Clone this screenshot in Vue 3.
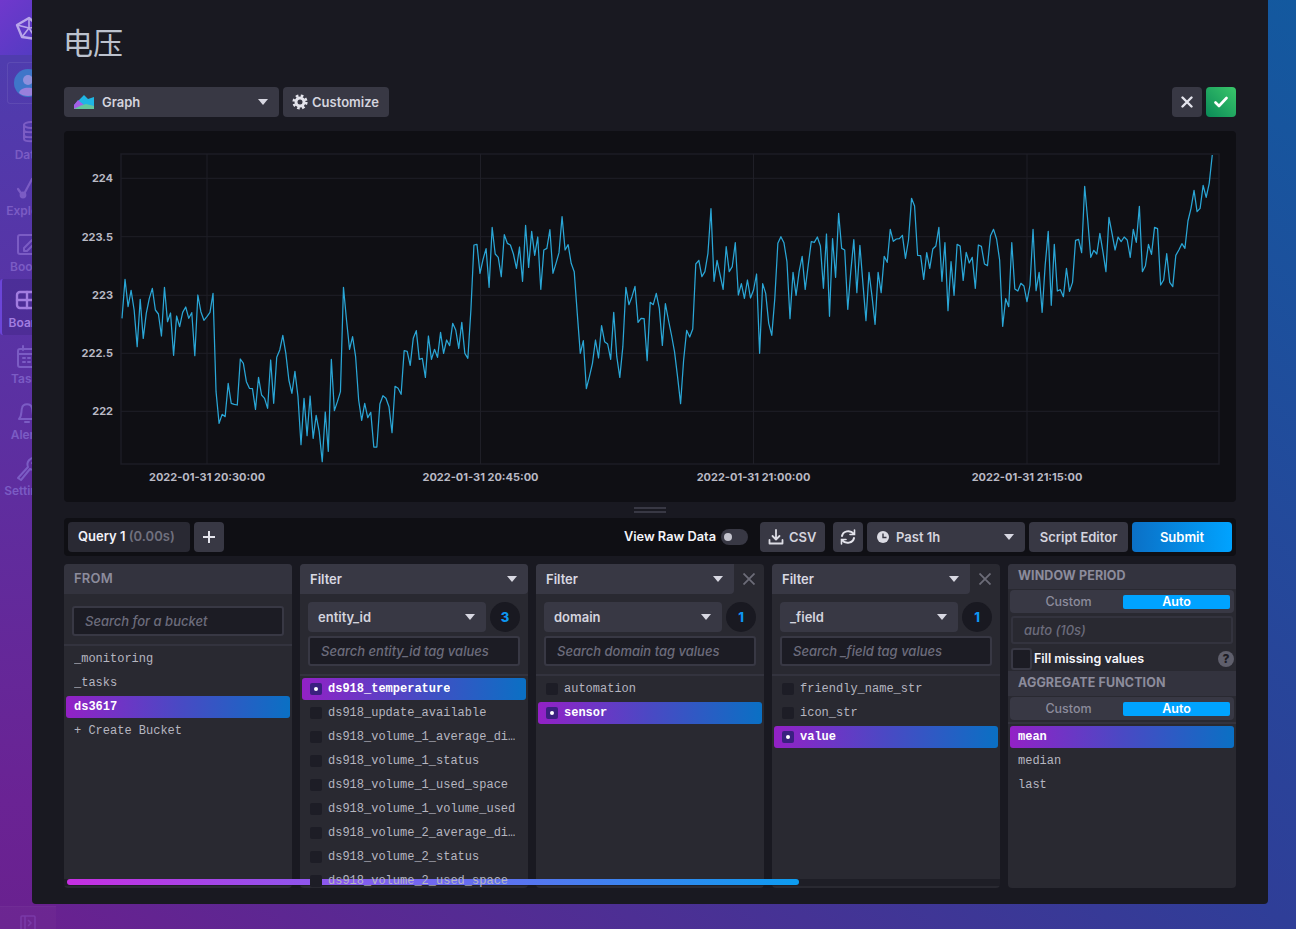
<script setup>
const segA = [505,388,470,421,480,590,448,565,490,445,415,480,492,558,412,515,489,616,498,530,487,471,505,488,617,435,485,511,500,487,430,725,820,793,800,700,760,763,765,627,640,695,715,716,778,682,735,745,775,630,760,622,600,556,610,690,730,664,740,884,745,857,738,865,796,845,935,786,904,628,782,755,725,412,510,598,560,620,750,811,760,803,787,891,891,762,737,745,770,848,709,715,733,602,604,646,565,542,628,625,682,558,628,598,622,547,610,570,587,520,540,595,517,610,625,480,285,283]
const segB = [370,328,296,412,232,312,322,380,254,280,285,312,355,291,394,226,352,244,316,261,418,300,295,239,370,340,308,200,300,284,340,365,490,610,572,716,680,640,570,624,527,575,582,628,487,620,682,590,412,464,440,409,517,505,506,632,457,464,430,475,586,461,510,555,605,680,761,630,541,561,537,342,331,380,365,310,176,394,331,375,418,290,365,350,278,435,401,445,390,444,420,372,610,401,430,520,556,445,280,260,278,335,506,367,436,365,319,418,345,275,277,261,288,415,252,499,266,382,190]
const segC = [295,300,478,365,269,428,286,400,512,367,440,523,367,428,319,337,238,274,267,266,256,325,270,145,168,316,317,388,308,355,297,288,232,394,278,482,335,436,283,288,391,307,339,322,415,285,289,342,347,257,238,267,330,529,446,470,278,417,423,400,408,455,405,238,422,367,487,345,244,466,283,423,419,440,355,424,397,271,268,308,109,210,322,301,312,250,305,365,202,250,300,261,275,261,270,322,238,277,169,365,347,283,313,232,236,405,390,311,397,410,316,300,281,295,213,175,121,185,175,106,142,100,15]

function seg(values, start, end) {
  const step = (end - start) / values.length
  return values.map((v, i) => `${(start + i * step - 64).toFixed(2)},${(150 + v / 3 - 131).toFixed(2)}`)
}
const linePoints = [
  ...seg(segA, 122, 480),
  ...seg(segB, 480, 841.67),
  ...seg(segC, 841.67, 1215.3)
].join(' ')

const yTicks = [
  { y: 47.3, label: '224' },
  { y: 105.7, label: '223.5' },
  { y: 164.3, label: '223' },
  { y: 222.3, label: '222.5' },
  { y: 280.3, label: '222' }
]
const xTicks = [
  { x: 143, label: '2022-01-31 20:30:00' },
  { x: 416.5, label: '2022-01-31 20:45:00' },
  { x: 689.5, label: '2022-01-31 21:00:00' },
  { x: 963, label: '2022-01-31 21:15:00' }
]

const navItems = [
  { label: 'Data', icon: 'data' },
  { label: 'Explore', icon: 'explore' },
  { label: 'Books', icon: 'books' },
  { label: 'Boards', icon: 'boards', active: true },
  { label: 'Tasks', icon: 'tasks' },
  { label: 'Alerts', icon: 'alerts' },
  { label: 'Settings', icon: 'settings' }
]

const buckets = [
  { name: '_monitoring' },
  { name: '_tasks' },
  { name: 'ds3617', selected: true },
  { name: '+ Create Bucket' }
]

const filters = [
  {
    key: 'entity_id', count: 3, closable: false,
    items: [
      { name: 'ds918_temperature', selected: true },
      { name: 'ds918_update_available' },
      { name: 'ds918_volume_1_average_di…' },
      { name: 'ds918_volume_1_status' },
      { name: 'ds918_volume_1_used_space' },
      { name: 'ds918_volume_1_volume_used' },
      { name: 'ds918_volume_2_average_di…' },
      { name: 'ds918_volume_2_status' },
      { name: 'ds918_volume_2_used_space', top: true }
    ]
  },
  {
    key: 'domain', count: 1, closable: true,
    items: [{ name: 'automation' }, { name: 'sensor', selected: true }]
  },
  {
    key: '_field', count: 1, closable: true,
    items: [{ name: 'friendly_name_str' }, { name: 'icon_str' }, { name: 'value', selected: true }]
  }
]
const aggregates = [{ name: 'mean', selected: true }, { name: 'median' }, { name: 'last' }]
</script>

<template>
  <div class="page">
    <aside class="side">
      <div class="brand">
        <svg class="logo" width="30" height="30" viewBox="0 0 30 30" fill="none" stroke="#b9a6ea" stroke-width="2.4" stroke-linejoin="round">
          <path d="M4 12 L16 5 L27 14 L23 26 L9 24 Z" />
          <path d="M4 12 L16 15 L27 14 M16 15 L9 24 M16 15 L23 26 M16 5 L16 15" stroke-width="1.6" />
        </svg>
      </div>
      <div class="profile">
        <span class="avatar">
          <svg width="28" height="28" viewBox="0 0 28 28">
            <circle cx="14" cy="14" r="14" fill="#3f76c9" />
            <circle cx="14" cy="11" r="5" fill="#8f90dd" />
            <path d="M5 24 C6 17 22 17 23 24 C19 28 9 28 5 24Z" fill="#9a80dc" />
          </svg>
        </span>
      </div>
      <nav class="nav">
        <div v-for="item in navItems" :key="item.label" class="nav-item" :class="{ active: item.active }">
          <svg width="24" height="24" viewBox="0 0 24 24" fill="none" stroke="currentColor" stroke-width="2" stroke-linecap="round" stroke-linejoin="round">
            <template v-if="item.icon === 'data'">
              <ellipse cx="13" cy="5" rx="7" ry="3" />
              <path d="M6 5 V19 C6 22 20 22 20 19 V5 M6 10 C6 13 20 13 20 10 M6 15 C6 18 20 18 20 15" />
            </template>
            <template v-else-if="item.icon === 'explore'">
              <path d="M0 13 L5 20 L14 3" stroke-width="2.2" />
              <circle cx="5" cy="19" r="2.4" fill="currentColor" />
            </template>
            <template v-else-if="item.icon === 'books'">
              <rect x="0" y="3" width="19" height="19" rx="2" />
              <path d="M6 16 L14 8 L17 11 L9 19 H6 Z" />
            </template>
            <template v-else-if="item.icon === 'boards'">
              <rect x="-2" y="4" width="21" height="16" rx="3" stroke-width="2.4" />
              <path d="M8 4 V20 M-2 12 H19" stroke-width="2.4" />
            </template>
            <template v-else-if="item.icon === 'tasks'">
              <rect x="0" y="5" width="20" height="18" rx="2" />
              <path d="M0 10 H20 M5 2 V6 M15 2 V6 M5 14 H7 M10 14 H12 M15 14 H17 M5 18 H7 M10 18 H12" />
            </template>
            <template v-else-if="item.icon === 'alerts'">
              <path d="M1 19 C4 16 3 12 4 8 C5 3 13 3 14 8 C15 12 14 16 17 19 Z" />
              <path d="M7 22 H11" />
            </template>
            <template v-else>
              <path d="M0 22 L10 11 C8 6 12 1 18 2 L14 7 L17 10 L21 6 C21 12 16 15 12 13 L3 24 Z" />
            </template>
          </svg>
          <span class="nav-label">{{ item.label }}</span>
        </div>
      </nav>
      <div class="collapse">
        <svg width="16" height="16" viewBox="0 0 16 16" fill="none" stroke="#7a3aa8" stroke-width="1.5">
          <rect x="1" y="1" width="14" height="14" rx="1" />
          <path d="M5 1 V15" />
          <path d="M8 5 L11 8 L8 11" />
        </svg>
      </div>
    </aside>

    <main class="overlay">
      <h1 class="title">电压</h1>

      <div class="toolbar">
        <button class="btn graph-select">
          <svg width="20" height="15" viewBox="0 0 20 15">
            <path d="M0 11 L5 6 L10 1 L14 5 L20 3 V13 H0Z" fill="#1fb6e4" />
            <path d="M0 11 L4 6 L10 11 L20 12 V15 H0Z" fill="#a45fe6" />
            <path d="M0 15 L7 11.5 L12 10 L20 12 V15Z" fill="#62c79c" />
          </svg>
          <span class="grow">Graph</span>
          <i class="caret"></i>
        </button>
        <button class="btn customize">
          <svg width="16" height="16" viewBox="0 0 16 16" fill="none" stroke="#e4e4ec">
            <circle cx="8" cy="8" r="6.3" stroke-width="2.6" stroke-dasharray="2.6 2.35" />
            <circle cx="8" cy="8" r="4" stroke-width="3" />
          </svg>
          <span>Customize</span>
        </button>
        <span class="grow"></span>
        <button class="btn square">
          <svg width="12" height="12" viewBox="0 0 12 12" stroke="#e4e4ec" stroke-width="2.4" stroke-linecap="round"><path d="M1.5 1.5 L10.5 10.5 M10.5 1.5 L1.5 10.5" /></svg>
        </button>
        <button class="btn square confirm">
          <svg width="14" height="12" viewBox="0 0 14 12" fill="none" stroke="#fff" stroke-width="2.6" stroke-linecap="round" stroke-linejoin="round"><path d="M1.5 6.5 L5 10 L12.5 2" /></svg>
        </button>
      </div>

      <section class="chart">
        <svg width="1172" height="371" viewBox="0 0 1172 371">
          <rect x="57" y="23" width="1098" height="310" fill="none" stroke="#1d1d25" stroke-width="1.5" />
          <line v-for="t in yTicks" :key="t.label" x1="57" x2="1155" :y1="t.y" :y2="t.y" stroke="#1f1f27" stroke-width="1" />
          <line v-for="t in xTicks" :key="t.x" :x1="t.x" :x2="t.x" y1="23" y2="333" stroke="#1f1f27" stroke-width="1" />
          <text v-for="t in yTicks" :key="'y' + t.label" class="tick" x="49" :y="t.y + 4" text-anchor="end">{{ t.label }}</text>
          <text v-for="t in xTicks" :key="'x' + t.x" class="tick" :x="t.x" y="350" text-anchor="middle">{{ t.label }}</text>
          <polyline :points="linePoints" fill="none" stroke="#2aa6d6" stroke-width="1.25" stroke-linejoin="round" />
        </svg>
      </section>

      <div class="handle"><i></i><i></i></div>

      <div class="querybar">
        <div class="query-tab">Query 1 <em>(0.00s)</em></div>
        <button class="btn square plus">
          <svg width="12" height="12" viewBox="0 0 12 12" stroke="#e4e4ec" stroke-width="2"><path d="M6 0 V12 M0 6 H12" /></svg>
        </button>
        <span class="grow"></span>
        <span class="raw-label">View Raw Data</span>
        <span class="switch"><i></i></span>
        <button class="btn csv">
          <svg width="16" height="16" viewBox="0 0 16 16" fill="none" stroke="#dcdce4" stroke-width="1.8" stroke-linecap="round" stroke-linejoin="round">
            <path d="M8 1 V10 M4.5 7 L8 10.5 L11.5 7 M1.5 11 V14.5 H14.5 V11" />
          </svg>
          CSV
        </button>
        <button class="btn square refresh">
          <svg width="16" height="16" viewBox="0 0 16 16" fill="none" stroke="#e4e4ec" stroke-width="2" stroke-linecap="round">
            <path d="M2 7 C3 2 10 0.5 13.5 4.5 M14 9 C13 14 6 15.5 2.5 11.5" />
            <path d="M14.5 1 V5.5 H10 M1.5 15 V10.5 H6" stroke-width="1.6" />
          </svg>
        </button>
        <button class="btn past">
          <svg width="12" height="12" viewBox="0 0 12 12"><circle cx="6" cy="6" r="6" fill="#dcdce4" /><path d="M6 2.5 V6.5 H9.5" fill="none" stroke="#383844" stroke-width="1.4" /></svg>
          <span class="grow">Past 1h</span>
          <i class="caret"></i>
        </button>
        <button class="btn script">Script Editor</button>
        <button class="btn submit">Submit</button>
      </div>

      <div class="builder">
        <section class="col">
          <header class="col-head dim">FROM</header>
          <div class="from-search"><input class="search" placeholder="Search for a bucket" /></div>
          <div class="rule"></div>
          <ul class="list">
            <li v-for="b in buckets" :key="b.name" class="row" :class="{ selected: b.selected }"><span class="name">{{ b.name }}</span></li>
          </ul>
        </section>

        <section v-for="f in filters" :key="f.key" class="col">
          <div class="head-row">
            <header class="col-head filter-head">
              <span class="grow">Filter</span>
              <i class="caret"></i>
            </header>
            <span v-if="f.closable" class="close">
              <svg width="12" height="12" viewBox="0 0 12 12" stroke="#6c6c78" stroke-width="1.8"><path d="M0.5 0.5 L11.5 11.5 M11.5 0.5 L0.5 11.5" /></svg>
            </span>
          </div>
          <div class="filter-controls">
            <div class="key-row">
              <button class="btn key"><span class="grow">{{ f.key }}</span><i class="caret"></i></button>
              <span class="badge">{{ f.count }}</span>
            </div>
            <input class="search" :placeholder="`Search ${f.key} tag values`" />
          </div>
          <div class="rule"></div>
          <ul class="list">
            <li v-for="it in f.items" :key="it.name" class="row" :class="{ selected: it.selected, above: it.top }">
              <i class="check"></i>
              <span class="name">{{ it.name }}</span>
            </li>
          </ul>
        </section>

        <section class="col side-col">
          <header class="sub-head">WINDOW PERIOD</header>
          <div class="seg"><span>Custom</span><span class="on">Auto</span></div>
          <input class="search period" placeholder="auto (10s)" />
          <div class="fill-row">
            <i class="fill-box"></i>
            <span class="grow">Fill missing values</span>
            <span class="help">?</span>
          </div>
          <header class="sub-head">AGGREGATE FUNCTION</header>
          <div class="seg"><span>Custom</span><span class="on">Auto</span></div>
          <div class="rule agg-rule"></div>
          <ul class="list agg-list">
            <li v-for="a in aggregates" :key="a.name" class="row" :class="{ selected: a.selected }"><span class="name">{{ a.name }}</span></li>
          </ul>
        </section>

        <div class="track"></div>
        <div class="thumb"></div>
      </div>
    </main>
  </div>
</template>

<style>
html, body { margin: 0; padding: 0; overflow: hidden; }
</style>

<style scoped>
* { box-sizing: border-box; }
.page {
  position: relative;
  width: 1296px;
  height: 929px;
  overflow: hidden;
  font-family: Inter, "Noto Sans CJK SC", sans-serif;
  background: linear-gradient(to top right, #6b2090 0%, #2f3e98 50%, #13599f 100%);
}
.grow { flex: 1; min-width: 0; text-align: left; }

/* sidebar behind the overlay */
.side {
  width: 56px;
  height: 929px;
  display: flex;
  flex-direction: column;
  background: linear-gradient(180deg, #4f3cae 60px, #6a2394 800px, #69218f 929px);
}
.brand {
  height: 55px;
  display: flex;
  align-items: center;
  padding-left: 13px;
  background: linear-gradient(135deg, #7038cc 0%, #4d3cc0 100%);
}
.profile {
  margin: 7px 0 0 7px;
  width: 42px;
  height: 42px;
  border: 1px solid rgba(255, 255, 255, .08);
  border-radius: 3px;
  display: flex;
  align-items: center;
  justify-content: center;
}
.avatar { display: block; height: 28px; }
.nav { margin-top: 7px; display: flex; flex-direction: column; }
.nav-item {
  height: 56px;
  display: flex;
  flex-direction: column;
  align-items: center;
  padding-top: 9px;
  gap: 3px;
  color: #7b5cc4;
}
.nav-item svg { margin-left: 4px; overflow: visible; }
.nav-item.active {
  color: #a27de0;
  background: rgba(30, 20, 90, .18);
  border-left: 2px solid #6b45d8;
  border-radius: 3px 0 0 3px;
}
.nav-label { font-size: 12px; font-weight: 600; white-space: nowrap; line-height: 16px; }
.collapse {
  margin-top: auto;
  height: 23px;
  padding: 8px 0 0 20px;
  overflow: hidden;
  background: rgba(255, 255, 255, .025);
  border-top: 1px solid rgba(255, 255, 255, .03);
}
.collapse svg { display: block; }

/* dialog overlay */
.overlay {
  position: absolute;
  left: 32px;
  top: 0;
  width: 1236px;
  height: 904px;
  padding: 0 32px;
  background: #191921;
  border-radius: 0 0 4px 4px;
  display: flex;
  flex-direction: column;
  color: #d8d8e2;
}
.title {
  margin: 0 0 0 -1px;
  height: 87px;
  padding-top: 19px;
  font-family: "Noto Sans CJK SC", sans-serif;
  font-size: 30px;
  line-height: 44px;
  font-weight: 400;
  color: #bcc2ce;
}
.toolbar { display: flex; gap: 4px; height: 30px; margin-bottom: 14px; }
.btn {
  height: 30px;
  border: 0;
  border-radius: 4px;
  background: #383844;
  color: #d4d4de;
  font: 600 13px/28px Inter, sans-serif;
  display: flex;
  align-items: center;
  padding: 0 0 1px;
  white-space: nowrap;
}
.caret {
  width: 0;
  height: 0;
  flex: none;
  border-left: 5.5px solid transparent;
  border-right: 5.5px solid transparent;
  border-top: 6.5px solid #d8d8e2;
}
.graph-select { width: 215px; padding: 0 11px 1px 10px; gap: 8px; }
.customize { width: 106px; padding: 0 9px 1px; gap: 4px; }
.square { width: 30px; justify-content: center; }
.confirm { background: linear-gradient(45deg, #0a8a58, #3ac66a); }

.chart { height: 371px; background: #0f0f14; border-radius: 4px; flex: none; }
.chart svg { display: block; }
.tick { font: 700 11px Inter, sans-serif; fill: #b9b9c4; }

.handle {
  height: 16px;
  display: flex;
  flex-direction: column;
  align-items: center;
  padding-top: 5px;
  gap: 2px;
}
.handle i { display: block; width: 32px; height: 2px; background: #383844; }

.querybar {
  height: 38px;
  padding: 4px;
  display: flex;
  align-items: center;
  background: #0f0f14;
  border-radius: 4px;
  margin-bottom: 8px;
}
.query-tab {
  width: 122px;
  height: 30px;
  border-radius: 4px;
  background: #292933;
  color: #f2f2f8;
  font: 600 13px/29px Inter, sans-serif;
  padding-left: 10px;
  margin-right: 4px;
}
.query-tab em { font-style: normal; color: #70707e; }
.raw-label { color: #f4f4fa; font-size: 12.8px; line-height: 14px; padding-bottom: 1px; font-weight: 600; margin-right: 5px; white-space: nowrap; }
.switch {
  width: 27px;
  height: 16px;
  border-radius: 8px;
  background: #383844;
  display: flex;
  align-items: center;
  padding-left: 3px;
  margin-right: 12px;
}
.switch i { display: block; width: 8px; height: 8px; border-radius: 50%; background: #c4c4ce; }
.csv { width: 65px; padding: 0 8px 1px; gap: 5px; margin-right: 8px; }
.refresh { margin-right: 4px; }
.past { width: 158px; padding: 0 11px 1px 10px; gap: 7px; margin-right: 4px; }
.script { width: 99px; justify-content: center; margin-right: 4px; }
.submit {
  width: 100px;
  justify-content: center;
  color: #fff;
  background: linear-gradient(90deg, #0b70c6, #00a3ff);
}

.builder {
  position: relative;
  height: 324px;
  display: flex;
  gap: 8px;
}
.col {
  width: 228px;
  flex: none;
  background: #292931;
  border-radius: 4px;
  overflow: hidden;
  display: flex;
  flex-direction: column;
}
.col-head {
  height: 30px;
  flex: none;
  display: flex;
  align-items: center;
  padding: 0 11px 0 10px;
  font-size: 13px;
  font-weight: 600;
  background: #383844;
  color: #d8d8e2;
}
.col-head.dim { background: #33333e; color: #8c8c9c; padding-bottom: 2px; letter-spacing: .2px; }
.head-row { display: flex; flex: none; }
.filter-head { flex: 1; border-radius: 0 0 4px 0; }
.close { width: 30px; display: flex; align-items: center; justify-content: center; }
.from-search { padding: 12px 8px 8px; }
.filter-controls { padding: 8px; display: flex; flex-direction: column; gap: 4px; }
.key-row { display: flex; gap: 4px; }
.key { flex: 1; padding: 0 11px 0 10px; }
.badge {
  width: 30px;
  height: 30px;
  border-radius: 50%;
  background: #191921;
  color: #0d96f2;
  display: flex;
  align-items: center;
  justify-content: center;
  font-size: 13px;
  font-weight: 800;
}
.search {
  display: block;
  width: 100%;
  height: 30px;
  padding: 0 11px;
  background: #1c1c24;
  border: 2px solid #383844;
  border-radius: 3px;
  outline: 0;
  font: italic 500 13px Inter, sans-serif;
  color: #d8d8e2;
}
.search::placeholder { color: #6c6c7c; opacity: 1; }
.rule { height: 2px; flex: none; background: #33333e; }
.list { margin: 0; padding: 2px; list-style: none; display: flex; flex-direction: column; gap: 2px; }
.row {
  height: 22px;
  flex: none;
  display: flex;
  align-items: center;
  gap: 6px;
  padding: 0 8px;
  border-radius: 3px;
  color: #b6b6c0;
  font: 12px/22px "Liberation Mono", monospace;
  white-space: nowrap;
}
.name { overflow: hidden; }
.row.above { position: relative; z-index: 2; }
.row.selected {
  color: #fff;
  font-weight: 700;
  background: linear-gradient(90deg, #9321c6 0%, #4a49c4 50%, #0a70c4 100%);
}
.check { width: 12px; height: 12px; flex: none; border-radius: 2px; background: #1d1d26; display: flex; align-items: center; justify-content: center; }
.row.selected .check { background: #3a2080; }
.row.selected .check::after { content: ""; width: 4px; height: 4px; border-radius: 50%; background: #fff; }

.sub-head {
  height: 25px;
  flex: none;
  padding: 0 10px;
  background: #33333e;
  color: #8c8c9c;
  font-size: 12.5px;
  font-weight: 700;
  line-height: 23px;
  letter-spacing: .1px;
}
.seg {
  margin: 1px 2px 0;
  height: 23px;
  flex: none;
  display: flex;
  align-items: center;
  gap: 0;
  padding: 0 4px;
  background: #383844;
  border-radius: 4px;
  font-size: 12.5px;
  font-weight: 500;
  color: #8c8c9c;
}
.seg span { flex: 1; text-align: center; line-height: 14px; }
.seg .on { flex: none; width: 107px; background: #00a3ff; color: #fff; font-weight: 600; border-radius: 2px; }
.period { margin: 3px 3px 0; width: 222px; height: 28px; background: #292931; border-color: #33333e; }
.fill-row {
  height: 27px;
  flex: none;
  display: flex;
  align-items: center;
  gap: 2px;
  padding: 2px 2px 0 3px;
  font-size: 12.5px;
  font-weight: 600;
  color: #f6f6fb;
}
.fill-box { width: 21px; height: 22px; flex: none; border: 2px solid #383844; border-radius: 3px; background: #1c1c24; }
.help {
  width: 16px;
  height: 16px;
  border-radius: 50%;
  background: #5f5f6c;
  color: #1c1c24;
  text-align: center;
  font-size: 12px;
  font-weight: 800;
  line-height: 16px;
}
.agg-rule { margin-top: 2px; }
.agg-list { padding-top: 2px; }
.track {
  position: absolute;
  left: 0;
  top: 315px;
  width: 936px;
  height: 7px;
  background: rgba(20, 20, 28, .5);
}
.thumb {
  position: absolute;
  z-index: 1;
  left: 3px;
  top: 315px;
  width: 732px;
  height: 6px;
  border-radius: 3px;
  background: linear-gradient(90deg, #c72fe2 0%, #7a63f0 45%, #0c9cf0 100%);
}
</style>
